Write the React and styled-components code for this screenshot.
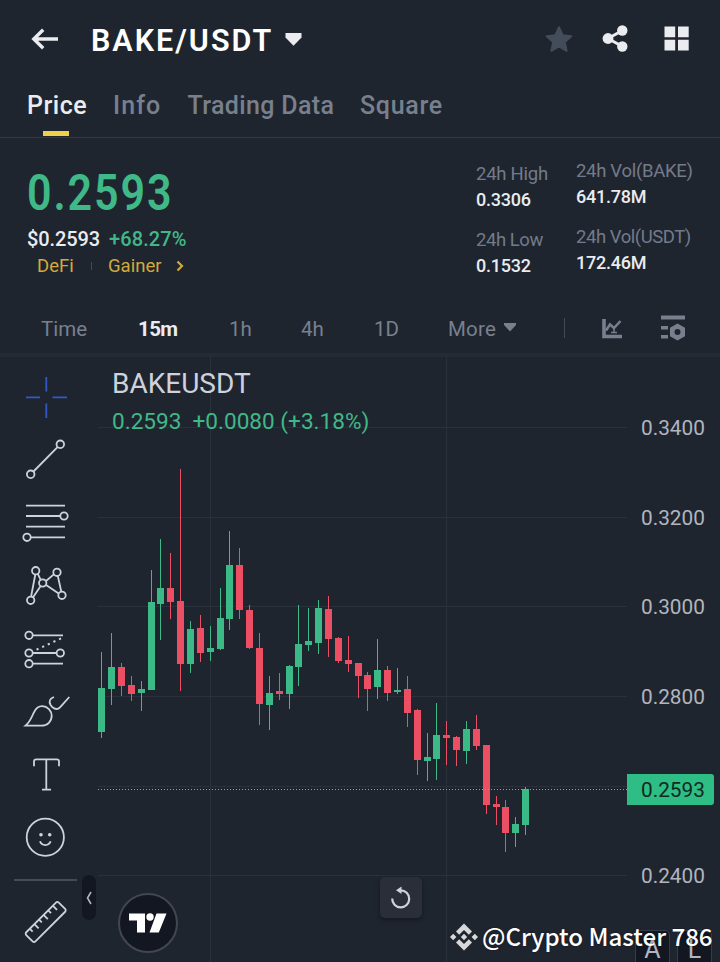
import React from 'react';
import styled, { createGlobalStyle } from 'styled-components';

const GlobalStyle = createGlobalStyle`
  * {
    box-sizing: border-box;
  }

  body {
    margin: 0;
    background: #1f252f;
    overflow: hidden;
  }
`

const Screen = styled.div`
  width: 720px;
  height: 962px;
  display: flex;
  flex-direction: column;
  overflow: hidden;
  background: #1f252f;
  color: #eaecef;
  font-family: Roboto, 'Liberation Sans', sans-serif;
  white-space: nowrap;

  svg {
    display: block;
    flex: none;
  }
`

const Header = styled.header`
  height: 80px;
  padding: 0 27px 2px 31px;
  display: flex;
  align-items: center;
`

const PairTitle = styled.h1`
  width: 194px;
  margin: 3px 0 0 32px;
  font-size: 30.5px;
  font-weight: 600;
  line-height: 36px;
  letter-spacing: 2px;
  color: #fff;
`

const HeaderActions = styled.div`
  margin-left: auto;
  display: flex;
  align-items: center;
  gap: 28px;
`

const Tabs = styled.nav`
  height: 58px;
  padding-left: 27px;
  display: flex;
  border-bottom: 1px solid #323844;
`

const Tab = styled.div`
  width: ${props => props.$width}px;
  display: flex;
  flex-direction: column;
  font-size: 25px;
  font-weight: 500;
  line-height: 51px;
  letter-spacing: ${props => props.$spacing}px;
  color: ${props => props.$active ? '#eaecef' : '#78808e'};
`

const TabMarker = styled.span`
  width: 26px;
  height: 5px;
  margin-left: 16px;
  background: #f0cf4a;
`

const Summary = styled.section`
  height: 165px;
  padding: 20px 0 0 27px;
  display: flex;
  align-items: flex-start;
`

const PriceBlock = styled.div`
  width: 449px;
  padding-top: 7px;
`

const LastPrice = styled.div`
  font-size: 50px;
  font-weight: 600;
  line-height: 56px;
  height: 54px;
  letter-spacing: 2.2px;
  transform: scaleX(0.86);
  transform-origin: left;
  color: #3fb987;
`

const PriceRow = styled.div`
  margin-top: 7px;
  display: flex;
  font-size: 20px;
  font-weight: 500;
  line-height: 27px;
`

const FiatPrice = styled.span`
  width: 82px;
  letter-spacing: -0.1px;
`

const Change = styled.span`
  letter-spacing: 0.1px;
  color: #3fb987;
`

const TagRow = styled.div`
  padding-left: 10px;
  display: flex;
  align-items: center;
  font-size: 18.5px;
  line-height: 26px;
  color: #d3a93c;
`

const Tag = styled.span`
  width: ${props => props.$width}px;
`

const TagDivider = styled.span`
  width: 1px;
  height: 8px;
  margin-right: 16px;
  background: #414957;
`

const StatColumn = styled.dl`
  width: 100px;
  margin: ${props => props.$top}px 0 0;
`

const StatLabel = styled.dt`
  font-size: 18.5px;
  line-height: 26px;
  letter-spacing: ${props => props.$spacing || 0}px;
  color: #737b8a;
`

const StatValue = styled.dd`
  margin: 0 0 14px;
  font-size: 18px;
  font-weight: 500;
  line-height: 26px;
  letter-spacing: -0.25px;
`

const Intervals = styled.div`
  height: 50px;
  padding-left: 41px;
  display: flex;
  align-items: center;
  font-size: 20.5px;
  color: #78808e;
`

const Interval = styled.span`
  width: ${props => props.$width}px;
  padding-top: 2px;
  letter-spacing: ${props => props.$spacing || 0}px;
  font-weight: ${props => props.$active ? 700 : 400};
  color: ${props => props.$active ? '#eaecef' : 'inherit'};
`

const IntervalDivider = styled.span`
  width: 1px;
  height: 20px;
  margin: 0 37px 0 48px;
  background: #414856;
`

const Workspace = styled.main`
  height: 609px;
  position: relative;
  display: flex;
  border-top: 4px solid #252b35;
`

const Toolbar = styled.aside`
  width: 97px;
  padding: 8px 0 0 22px;
`

const ToolButton = styled.div`
  height: 63px;
  display: flex;
  align-items: center;
  color: ${props => props.$active ? '#3358c8' : '#ced2dc'};
`

const ToolDivider = styled.div`
  width: 63px;
  height: 2px;
  margin: 10px 0 9px -8px;
  background: #454b57;
`

const Legend = styled.div`
  position: absolute;
  left: 112px;
  top: 9px;
`

const Symbol = styled.div`
  font-size: 28px;
  line-height: 36px;
  color: #ced2dc;
`

const LegendValues = styled.div`
  margin-top: 4px;
  display: flex;
  gap: 11px;
  font-size: 22.6px;
  line-height: 32px;
  color: #3fb987;
`

const Handle = styled.div`
  position: absolute;
  left: 82px;
  top: 518px;
  width: 14px;
  height: 45px;
  display: grid;
  place-items: center;
  border-radius: 7px;
  background: #131722;
`

const LogoBadge = styled.div`
  position: absolute;
  left: 118px;
  top: 536px;
  width: 60px;
  height: 60px;
  display: grid;
  place-items: center;
  border: 2px solid #434651;
  border-radius: 50%;
  background: #131722;
`

const ResetButton = styled.div`
  position: absolute;
  left: 380px;
  top: 520px;
  width: 42px;
  height: 41px;
  display: grid;
  place-items: center;
  border-radius: 5px;
  background: #2a2e39;
  box-shadow: 0 2px 5px rgba(0, 0, 0, 0.4);
`

const ScaleButtons = styled.div`
  position: absolute;
  left: 635px;
  top: 573px;
  display: flex;
  gap: 7px;
`

const ScaleButton = styled.div`
  width: 35px;
  height: 40px;
  border: 1px solid #363b47;
  border-radius: 5px;
  background: #131722;
  font-size: 25px;
  line-height: 37px;
  text-align: center;
  color: #b2b5be;
`

const Watermark = styled.div`
  position: absolute;
  left: 450px;
  top: 563px;
  display: flex;
  align-items: center;
  gap: 4px;
  font-family: 'Noto Sans CJK SC', 'Noto Sans', sans-serif;
  font-size: 24.1px;
  font-weight: 500;
  line-height: 36px;
  color: #fff;
  text-shadow: 0 0 2px rgba(0, 0, 0, 0.5);
`

const WatermarkName = styled.span`
  margin-top: -2px;
`

// x, high, body top, body bottom, low, rising
const candles = [
  [101, 652, 688, 732, 738, 1],
  [111, 633, 667, 689, 705, 1],
  [121, 663, 667, 686, 696, 0],
  [131, 676, 685, 694, 701, 0],
  [141, 681, 689, 693, 711, 1],
  [151, 570, 602, 690, 690, 1],
  [160, 539, 588, 604, 640, 1],
  [170, 553, 588, 602, 619, 0],
  [180, 469, 601, 664, 691, 0],
  [190, 621, 629, 664, 673, 1],
  [200, 615, 628, 653, 662, 0],
  [210, 626, 648, 652, 661, 1],
  [220, 588, 618, 649, 650, 1],
  [229, 531, 565, 619, 630, 1],
  [239, 548, 565, 610, 619, 0],
  [249, 605, 610, 648, 649, 0],
  [259, 633, 648, 704, 725, 0],
  [269, 676, 693, 705, 730, 1],
  [279, 673, 691, 694, 700, 0],
  [289, 665, 666, 694, 709, 1],
  [298, 605, 644, 667, 686, 1],
  [308, 608, 641, 645, 651, 1],
  [318, 600, 608, 643, 654, 1],
  [328, 596, 609, 639, 657, 0],
  [338, 637, 638, 661, 663, 0],
  [348, 636, 660, 664, 672, 0],
  [358, 663, 663, 676, 698, 0],
  [367, 672, 675, 689, 711, 0],
  [377, 639, 670, 687, 699, 1],
  [387, 666, 670, 693, 701, 0],
  [397, 668, 690, 692, 694, 1],
  [407, 676, 689, 713, 727, 0],
  [417, 709, 710, 760, 775, 0],
  [427, 733, 757, 761, 781, 1],
  [436, 703, 735, 759, 780, 1],
  [446, 721, 735, 738, 765, 0],
  [456, 736, 737, 750, 766, 0],
  [466, 721, 729, 751, 764, 1],
  [476, 715, 729, 746, 750, 0],
  [486, 745, 745, 805, 814, 0],
  [496, 796, 804, 807, 825, 0],
  [505, 800, 807, 833, 852, 0],
  [515, 817, 824, 833, 847, 1],
  [525, 787, 789, 825, 835, 1],
]

const priceLevels = [
  [427, '0.3400'],
  [517, '0.3200'],
  [606, '0.3000'],
  [696, '0.2800'],
  [786, ''],
  [875, '0.2400'],
]

const CandleChart = () => (
  <svg width="623" height="605" viewBox="97 357 623 605">
    {priceLevels.map(([y, label]) => (
      <g key={y}>
        <rect x="98" y={y} width="529" height="1" fill="#2b313b" />
        <text x="641" y={y + 8} fontSize="20.8" fill="#b2b5be">{label}</text>
      </g>
    ))}
    <rect x="210" y="357" width="1" height="605" fill="#2b313b" />
    <rect x="446" y="357" width="1" height="605" fill="#2b313b" />
    {candles.map(([x, high, top, bottom, low, rising]) => (
      <g key={x} fill={rising ? '#3bb987' : '#ec4f64'}>
        <rect x={x} y={high} width="1" height={low - high} />
        <rect x={x - 3} y={top} width="7" height={bottom - top} />
      </g>
    ))}
    <path d="M98 789.5H627" stroke="#5fbfa3" strokeDasharray="1 2" />
    <path d="M627 774h84a3 3 0 0 1 3 3v25a3 3 0 0 1-3 3h-84z" fill="#2ebd85" />
    <text x="641" y="797" fontSize="20.8" fill="#12291f">0.2593</text>
  </svg>
)

const Tool = ({ active, children }) => (
  <ToolButton $active={active}>
    <svg width="48" height="48" viewBox="0 0 48 48" fill="none" stroke="currentColor" strokeWidth="1.8">
      {children}
    </svg>
  </ToolButton>
)

const Tools = () => (
  <Toolbar>
    <Tool active>
      <path d="M24.3 4v14.5M24.3 30.5V45M4 24.3h14M30.5 24.3H45" />
    </Tool>
    <Tool>
      <circle cx="8.7" cy="38.3" r="3.8" />
      <circle cx="38.3" cy="8.3" r="3.8" />
      <path d="M11.5 35.5l24-24.3" />
    </Tool>
    <Tool>
      <path d="M4 6.7h39M4 17h34M4 27.7h39M9 38.3h34" />
      <circle cx="42" cy="17" r="3.7" />
      <circle cx="5" cy="38.3" r="3.7" />
    </Tool>
    <Tool>
      <path d="M13.3 12.5L9.1 34.5M15.8 11.8l2.8 5.8M18.5 24.2l-7.4 11M24 19l7.8-6.6M24.1 22.9l12.6 8.5M35.8 14l3.5 15.6" />
      <circle cx="13.7" cy="8.7" r="3.7" />
      <circle cx="35" cy="10.3" r="3.7" />
      <circle cx="20.7" cy="21" r="3.7" />
      <circle cx="8.7" cy="38.3" r="3.7" />
      <circle cx="40" cy="33.3" r="3.7" />
    </Tool>
    <Tool>
      <path d="M11 10.3h30M11 28h23.5M11 38.7h30" />
      <path d="M14.5 24.7l25-11.5" strokeWidth="2" strokeDasharray="2.2 4" />
      <circle cx="7" cy="10.3" r="3.7" />
      <circle cx="7" cy="28" r="3.7" />
      <circle cx="38.3" cy="28" r="3.7" />
      <circle cx="7" cy="38.7" r="3.7" />
    </Tool>
    <Tool>
      <path d="M3.5 37.7C8.5 33.5 10 28 12.2 23.8C14 20.2 17 18.2 20.2 18.2C25.5 18.2 29.7 22.5 29.7 27.8C29.7 33.3 25.4 37.7 19.7 37.7Z" />
      <path d="M32 9C27.6 10.5 26.6 13.5 28.6 17L30.3 19.2C32.5 21.5 36 21.6 38 19.4L47.3 9" />
    </Tool>
    <Tool>
      <path d="M12 15.2v-4.7q0-2.2 2.2-2.2h20.6q2.2 0 2.2 2.2v4.7M24.3 8.3v30.4M20 38.7h9" />
    </Tool>
    <Tool>
      <circle cx="23.3" cy="23.3" r="18.6" />
      <circle cx="19" cy="20.7" r="1.8" fill="currentColor" stroke="none" />
      <circle cx="27.7" cy="20.7" r="1.8" fill="currentColor" stroke="none" />
      <path d="M18 27.3c1.6 5 9 5 10.6 0" />
    </Tool>
    <ToolDivider />
    <Tool>
      <g transform="translate(23.7 24) rotate(-45)">
        <rect x="-23" y="-6.5" width="46" height="13" rx="2" />
        <path d="M-16-6.5v4M-9.5-6.5v6M-3-6.5v4M3.5-6.5v6M10-6.5v4M16.5-6.5v6" />
      </g>
    </Tool>
  </Toolbar>
)

const Stat = ({ label, value, spacing }) => (
  <>
    <StatLabel $spacing={spacing}>{label}</StatLabel>
    <StatValue>{value}</StatValue>
  </>
)

export default function App() {
  return (
    <Screen>
      <GlobalStyle />
      <Header>
        <svg width="28" height="24" viewBox="0 0 28 24" fill="none" stroke="#eaecef" strokeWidth="3.4">
          <path d="M12.2 2.800L2.800 12l9.400 9.200M3 12h24" />
        </svg>
        <PairTitle>BAKE/USDT</PairTitle>
        <svg width="17" height="13" viewBox="0 0 17 13">
          <path d="M.5 0h16v4.500L8.500 12.800.5 4.500z" fill="#eaecef" />
        </svg>
        <HeaderActions>
          <svg width="28" height="28" viewBox="0 0 28 28">
            <path d="M14 2.200l3.600 8 8.700 1-6.500 5.900 1.800 8.700L14 21.500l-7.600 4.300 1.800-8.700L1.700 11.200l8.700-1z" fill="#434c5a" stroke="#434c5a" strokeWidth="2" strokeLinejoin="round" />
          </svg>
          <svg width="28" height="28" viewBox="0 0 28 28" fill="#eaecef">
            <path d="M21.500 5.500L7 13.500l14.500 8" fill="none" stroke="#eaecef" strokeWidth="3" />
            <circle cx="21.300" cy="5.500" r="5.200" />
            <circle cx="7" cy="13.500" r="5.400" />
            <circle cx="21.300" cy="21.500" r="5.200" />
          </svg>
          <svg width="36" height="26" viewBox="0 0 36 26" fill="#eaecef">
            <path d="M7.500.5h10.700v10.700H7.500zM21 .5h10.700v10.700H21zM7.500 13.800h10.700v10.700H7.500zM21 13.800h10.700v10.700H21z" />
          </svg>
        </HeaderActions>
      </Header>

      <Tabs>
        <Tab $active $width={86} $spacing={0.5}>
          Price
          <TabMarker />
        </Tab>
        <Tab $width={74.5} $spacing={1.1}>Info</Tab>
        <Tab $width={172.5} $spacing={0.35}>Trading Data</Tab>
        <Tab $width={90} $spacing={0.7}>Square</Tab>
      </Tabs>

      <Summary>
        <PriceBlock>
          <LastPrice>0.2593</LastPrice>
          <PriceRow>
            <FiatPrice>$0.2593</FiatPrice>
            <Change>+68.27%</Change>
          </PriceRow>
          <TagRow>
            <Tag $width={54}>DeFi</Tag>
            <TagDivider />
            <Tag $width={68}>Gainer</Tag>
            <svg width="9" height="12" viewBox="0 0 9 12" fill="none" stroke="#d3a93c" strokeWidth="2.200">
              <path d="M1.500 1.500L6 6l-4.500 4.500" />
            </svg>
          </TagRow>
        </PriceBlock>
        <StatColumn $top={3}>
          <Stat label="24h High" value="0.3306" spacing={-0.25} />
          <Stat label="24h Low" value="0.1532" spacing={-0.45} />
        </StatColumn>
        <StatColumn $top={0}>
          <Stat label="24h Vol(BAKE)" value="641.78M" spacing={-0.3} />
          <Stat label="24h Vol(USDT)" value="172.46M" spacing={-0.45} />
        </StatColumn>
      </Summary>

      <Intervals>
        <Interval $width={97}>Time</Interval>
        <Interval $active $width={91} $spacing={-0.6}>15m</Interval>
        <Interval $width={72}>1h</Interval>
        <Interval $width={73}>4h</Interval>
        <Interval $width={74}>1D</Interval>
        <Interval $width={56} $spacing={0.2}>More</Interval>
        <svg width="12" height="12" viewBox="0 0 12 12">
          <path d="M0 1h12v2L6 9.500 0 3z" fill="#78808e" />
        </svg>
        <IntervalDivider />
        <svg width="20" height="21" viewBox="0 0 20 21" fill="none" stroke="#78808e">
          <path d="M2 1v17.500h18" strokeWidth="3.600" />
          <path d="M4 12.500l4-6 4 3.500 6.500-7" strokeWidth="2.500" />
          <path d="M9 14.500h6M12 11v3" strokeWidth="1.500" />
        </svg>
        <svg width="64" height="26" viewBox="0 0 64 26">
          <path d="M39 .5h24v4H39zM39 11h7v3.500h-7zM39 20h7v3.500h-7z" fill="#78808e" />
          <path d="M55.500 8.500l7.500 4.200v8.600l-7.500 4.200-7.500-4.200v-8.600z" fill="#78808e" />
          <circle cx="55.500" cy="17" r="3" fill="#1f252f" />
        </svg>
      </Intervals>

      <Workspace>
        <Tools />
        <CandleChart />
        <Legend>
          <Symbol>BAKEUSDT</Symbol>
          <LegendValues>
            <span>0.2593</span>
            <span>+0.0080 (+3.18%)</span>
          </LegendValues>
        </Legend>
        <Handle>
          <svg width="6" height="14" viewBox="0 0 6 14" fill="none" stroke="#b2b5be" strokeWidth="1.600">
            <path d="M5 1L1.500 7 5 13" />
          </svg>
        </Handle>
        <LogoBadge>
          <svg width="38" height="21" viewBox="0 0 38 21" fill="#fff">
            <path d="M0 .5h16v19H8V7.500H0zM27.500.5H37.500L29.800 19.500H20.500z" />
            <circle cx="21" cy="4" r="3.700" />
          </svg>
        </LogoBadge>
        <ResetButton>
          <svg width="22" height="24" viewBox="0 0 22 24" fill="none" stroke="#ced2dc" strokeWidth="2.200">
            <path d="M2.200 12.500a8.500 8.500 0 1 0 8.500-8.200H9" />
            <path d="M11.500.5v7.500L6 4.300z" fill="#ced2dc" stroke="none" />
          </svg>
        </ResetButton>
        <ScaleButtons>
          <ScaleButton>A</ScaleButton>
          <ScaleButton>L</ScaleButton>
        </ScaleButtons>
        <Watermark>
          <svg width="28" height="28" viewBox="0 0 28 28" fill="#d8d8d9">
            <path d="M14 .5l8 8-3.200 3.200L14 7l-4.800 4.700L6 8.500zM14 27.500l8-8-3.200-3.200L14 21l-4.800-4.700L6 19.500zM3.200 10.800L6.400 14l-3.200 3.200L0 14zM24.800 10.800L28 14l-3.200 3.200-3.200-3.200zM14 10.800l3.200 3.200-3.200 3.200-3.200-3.200z" />
          </svg>
          <WatermarkName>@Crypto Master 786</WatermarkName>
        </Watermark>
      </Workspace>
    </Screen>
  )
}
